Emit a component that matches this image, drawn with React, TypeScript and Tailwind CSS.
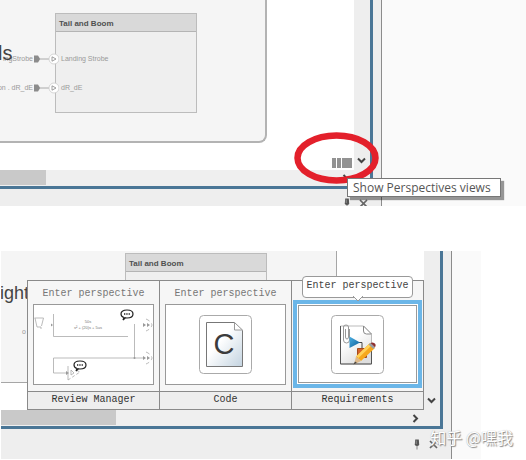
import type { ReactNode } from "react";

function ChevronDown() {
  return (
    <svg width="9" height="7" viewBox="0 0 9 7" fill="none" stroke="#444" strokeWidth="2">
      <path d="M1 1.5 4.5 5 8 1.5" />
    </svg>
  );
}

function ChevronRight() {
  return (
    <svg width="7" height="9" viewBox="0 0 7 9" fill="none" stroke="#444" strokeWidth="2">
      <path d="M1.5 1 5 4.5 1.5 8" />
    </svg>
  );
}

function Pin() {
  return (
    <svg width="8" height="11" viewBox="0 0 8 11">
      <path d="M2.200 0.500h3.600l.4 5-1 1.500H2.800l-1-1.500z" fill="#555" />
      <path d="M4 6.500v4" stroke="#888" />
      <path d="M3.200 1.500v3.500" stroke="#aaa" strokeWidth="0.700" />
    </svg>
  );
}

function Close() {
  return (
    <svg width="9" height="9" viewBox="0 0 9 9" stroke="#666" strokeWidth="1.700">
      <path d="M1 1l7 7M8 1 1 8" />
    </svg>
  );
}

function Port({ source, name }: { source: string; name: string }) {
  return (
    <div className="flex h-3 items-center text-[7px] leading-3 text-[#9a9a9a]">
      <span className="flex w-[33px] shrink-0 justify-end whitespace-nowrap">{source}</span>
      <svg width="26" height="12" viewBox="0 0 26 12" className="shrink-0">
        <path d="M1 2.500h4l2.200 3.500L5 9.500H1z" fill="#8c8c8c" />
        <path d="M7 6h9" stroke="#aaa" />
        <circle cx="21" cy="6" r="5" fill="#fff" stroke="#ccc" strokeWidth="0.800" />
        <path d="M19 3.800v4.400L23 6z" fill="#fff" stroke="#888" strokeWidth="0.800" />
      </svg>
      <span className="pl-0.5 whitespace-nowrap">{name}</span>
    </div>
  );
}

function Block() {
  return (
    <div className="h-[100px] w-[142px] border border-[#bcbcbc] bg-[#efefef]">
      <div className="h-[18px] border-b border-[#b4b4b4] bg-[#d9d9d9] pl-[3px] text-[8px] leading-[19px] font-bold text-[#505050]">
        Tail and Boom
      </div>
    </div>
  );
}

type FrameProps = {
  canvas: ReactNode;
  overlay?: ReactNode;
  canvasClass: string;
  thumbClass: string;
  footerClass: string;
  sideClass: string;
};

function Frame({ canvas, overlay, canvasClass, thumbClass, footerClass, sideClass }: FrameProps) {
  return (
    <div className="relative flex">
      <div className="min-w-0 flex-1 border-r border-[#8c8c8c] bg-[#eeeeee]">
        <div className="mr-2 border-r-[3px] border-b-[3px] border-[#4a7696]">
          <div className={`flex ${canvasClass}`}>
            <div className="relative min-w-0 flex-1 overflow-hidden bg-white">{canvas}</div>
            <div className="flex w-4 shrink-0 flex-col items-center justify-end pr-0.5 pb-1.5">
              <button aria-label="Scroll down"><ChevronDown /></button>
            </div>
          </div>
          <div className="flex h-4 items-center justify-between bg-[#efefef] pr-[21px]">
            <div className={`h-[15px] self-start bg-[#c9c9c9] ${thumbClass}`} />
            <button aria-label="Scroll right"><ChevronRight /></button>
          </div>
        </div>
        <div className={`flex items-center justify-end gap-2 overflow-hidden pr-[13px] ${footerClass}`}>
          <button aria-label="Pin panel"><Pin /></button>
          <button aria-label="Close panel"><Close /></button>
        </div>
      </div>
      <div className={`shrink-0 bg-[#fafafa] ${sideClass}`} />
      {overlay}
    </div>
  );
}

function ReviewDrawing() {
  return (
    <svg width="119" height="79" viewBox="0 0 119 79" fill="none" stroke="#aaa" strokeWidth="0.800">
      <path d="M0.500 13h9l-2 8M1 13l2 9h4v2" />
      <path d="M19.500 9v22.500H94M19.500 68V53H110M19.500 68H32M100.500 19v34" />
      <path d="M17 18.500v3l2-1.500zM32 66v4l3-2z" fill="#999" stroke="none" />
      <path d="M34 61v14" />
      <path d="M34 75l12-8-4-2" strokeDasharray="3 2" />
      <path d="M37 65l3 3-3 2z" />
      <circle cx="100.500" cy="53" r="1" fill="#999" stroke="none" />
      {[20, 53].map((y) => (
        <g key={y}>
          <path d={`M109 ${y - 2}v4l3-2zM113 ${y - 2}v4l3-2z`} fill="#999" stroke="none" />
          <path d={`M112 ${y - 6}q5 2 6 6q-1 4-6 6`} strokeDasharray="4 3" />
        </g>
      ))}
      <g fill="#777" stroke="none" fontSize="4" textAnchor="middle" fontFamily="Liberation Sans, sans-serif">
        <text x="54" y="18">50s</text>
        <text x="54" y="24">s² + (20)s + 5us</text>
      </g>
      {[[93, 9], [46, 60]].map(([x, y]) => (
        <g key={x}>
          <path
            d={`M${x - 4} ${y + 6}l1-2.500q-3-1-3-3.500c0-2.500 2.500-4 6-4s6 1.500 6 4-2.500 4-6 4q-1 0-1.500-.2z`}
            fill="#fff"
            stroke="#222"
            strokeWidth="1.200"
          />
          <path d={`M${x - 3} ${y}h1.300m1 0h1.300m1 0h1.300`} stroke="#222" strokeWidth="1.300" />
        </g>
      ))}
    </svg>
  );
}

function CodeDrawing() {
  return (
    <svg width="53" height="59" viewBox="0 0 53 59">
      <defs>
        <linearGradient id="page" x1="0" y1="0" x2="1" y2="1">
          <stop offset="0.400" stopColor="#fff" />
          <stop offset="1" stopColor="#c3d3e0" />
        </linearGradient>
      </defs>
      <rect x="0.500" y="0.500" width="52" height="58" rx="4" fill="#fff" stroke="#aaa" />
      <path d="M7.500 7.500H35.500L43.500 15.500V51.500H7.500z" fill="url(#page)" stroke="#777" />
      <path d="M35.500 7.500v7.500h8z" fill="#fff" stroke="#999" />
      <text x="25" y="39" fontSize="29" textAnchor="middle" fill="#3c3c3c" fontFamily="Liberation Sans, sans-serif">
        C
      </text>
    </svg>
  );
}

function RequirementsDrawing() {
  return (
    <svg width="53" height="59" viewBox="0 0 53 59">
      <defs>
        <linearGradient id="sheet" x1="0" y1="0" x2="0.600" y2="1">
          <stop offset="0.400" stopColor="#fff" />
          <stop offset="1" stopColor="#dedede" />
        </linearGradient>
        <linearGradient id="tri" x1="0" y1="0" x2="1" y2="1">
          <stop offset="0" stopColor="#4db0e2" />
          <stop offset="1" stopColor="#0b5c98" />
        </linearGradient>
      </defs>
      <rect x="0.500" y="0.500" width="52" height="58" rx="4" fill="#fff" stroke="#aaa" />
      <path d="M9.500 11H32.500L40.500 19.500V49H9.500z" fill="url(#sheet)" stroke="#aaa" strokeWidth="0.800" />
      <path d="M9.500 11V49H40.500V36" fill="none" stroke="#555" />
      <path d="M32.500 11v5q0 3 3 3h5z" fill="#fff" stroke="#888" />
      <path d="M18.500 14v11q0 3-3 3t-3-3V11M12.500 12q0-2 2.500-2t2.500 2v10q0 2-1.500 2t-1.500-2v-8" fill="none" stroke="#999" />
      <path d="M27 27.500h4V34" fill="none" stroke="#444" />
      <path d="M18.500 21.500 29 27.500 18.500 33z" fill="url(#tri)" />
      <path d="M26.500 33.500h9v9h-9z" fill="#d5622b" stroke="#a34b1c" />
      <path d="M39 28 44 33 30 46 25 41.500z" fill="#f6a81c" />
      <path d="M38 29 40 31 27.500 43 25 41.500z" fill="#ffd25a" />
      <path d="M25 41.500 30 46 23 49.500z" fill="#ddb98a" />
      <path d="M24 46.500 26 48 22.500 49.500z" fill="#444" />
      <path d="M37.500 29.500 39.500 28 44 32 42.500 34z" fill="#9aa0a6" />
      <path d="M39.500 28q2-1 4 .3t.5 4z" fill="#8e2f2f" />
    </svg>
  );
}

const perspectives = [
  { name: "Review Manager", drawing: <ReviewDrawing />, active: false },
  { name: "Code", drawing: <CodeDrawing />, active: false },
  { name: "Requirements", drawing: <RequirementsDrawing />, active: true },
];

function PerspectiveMenu() {
  return (
    <div className="absolute top-[29px] right-[57px] flex border-y border-r border-[#8a8a8a] font-['Liberation_Mono',monospace] text-[10px]">
      {perspectives.map((p) => (
        <button key={p.name} className="relative flex w-[132px] flex-col border-l border-[#8a8a8a] bg-[#f6f6f6]">
          {p.active ? (
            <>
              <span className="absolute -top-[5px] left-[10px] z-10 h-[22px] w-[111px] rounded border border-[#999] bg-white leading-[18px] text-[#444]">
                Enter perspective
                <svg width="10" height="6" viewBox="0 0 10 6" className="absolute -bottom-[5px] left-[50px]">
                  <path d="M0 0 5 5 10 0" fill="#fff" stroke="#999" />
                </svg>
              </span>
              <span className="mx-[1px] mt-[19px] mb-[3px] grid h-[88px] w-[129px] place-items-center border-4 border-[#6bb6e8] bg-white">
                <span className="grid h-[78px] w-[119px] place-items-center border border-[#999]">{p.drawing}</span>
              </span>
            </>
          ) : (
            <>
              <span className="h-[23px] w-full text-center leading-[26px] text-[#777]">Enter perspective</span>
              <span className="mx-[5px] mb-[6px] grid h-[81px] w-[121px] place-items-center border border-[#999] bg-white">
                {p.drawing}
              </span>
            </>
          )}
          <span className="h-[18px] w-full border-t border-[#8a8a8a] bg-[#eeeeee] text-center leading-4 text-[#333]">
            {p.name}
          </span>
        </button>
      ))}
    </div>
  );
}

export default function App() {
  return (
    <main className="bg-white pb-px font-['Liberation_Sans',Arial,sans-serif]">
      <Frame
        canvasClass="h-[170px]"
        thumbClass="w-[46px]"
        footerClass="h-[17px] pt-3"
        sideClass="w-[144px]"
        canvas={
          <>
            <div className="absolute top-0 left-0 h-[143px] w-[267px] rounded-br-lg border-r-2 border-b-2 border-[#b3b3b3] bg-[#f5f5f5]" />
            <div className="absolute top-[13px] left-[55px]"><Block /></div>
            <div className="absolute top-[53px] left-0"><Port source="ingStrobe" name="Landing Strobe" /></div>
            <div className="absolute top-[82px] left-0"><Port source="on . dR_dE" name="dR_dE" /></div>
            <span className="absolute top-[41px] -left-[2px] text-[20px] leading-6 text-[#444]">ls</span>
            <button aria-label="Show Perspectives views" className="absolute right-[2px] bottom-[2px] flex h-[10px] gap-px">
              <span className="h-full w-1 bg-[#929292]" />
              <span className="h-full w-1 bg-[#929292]" />
              <span className="h-full w-[10px] bg-[#929292]" />
            </button>
          </>
        }
        overlay={
          <>
            <svg className="pointer-events-none absolute top-[132px] right-[147px]" width="85" height="53" viewBox="0 0 85 53">
              <ellipse cx="42.500" cy="26" rx="39" ry="22.500" fill="none" stroke="#e3202b" strokeWidth="6.500" />
            </svg>
            <div
              role="tooltip"
              className="absolute top-[178px] right-[25px] h-[19px] w-[154px] border border-[#777] bg-white pl-[5px] font-['Open_Sans',sans-serif] text-[12px] leading-[17px] whitespace-nowrap text-[#555] shadow-[3px_3px_1px_rgba(0,0,0,0.4)]"
            >
              Show Perspectives views
            </div>
          </>
        }
      />
      <div className="mt-[45px] mr-[45px] ml-px">
        <Frame
          canvasClass="h-[159px]"
          thumbClass="w-[115px]"
          footerClass="h-[30px]"
          sideClass="w-[29px]"
          canvas={
            <>
              <div className="absolute top-0 left-0 h-[132px] w-[336px] border-r border-b border-[#a6a6a6] bg-[#f5f5f5]" />
              <div className="absolute top-[2px] left-[124px]"><Block /></div>
              <span className="absolute top-[30px] -left-px text-[18px] leading-6 text-[#444]">ight</span>
              <span className="absolute top-[77px] left-[21px] text-[7px] leading-2 text-[#9a9a9a]">o</span>
            </>
          }
          overlay={
            <>
              <PerspectiveMenu />
              <span className="absolute top-[174px] -right-[32px] font-['Noto_Sans_CJK_SC',sans-serif] text-[16px] leading-6 whitespace-nowrap text-white [text-shadow:1px_1px_1px_#888,0_0_1px_#aaa]">
                知乎 @嘿我
              </span>
            </>
          }
        />
      </div>
    </main>
  );
}
